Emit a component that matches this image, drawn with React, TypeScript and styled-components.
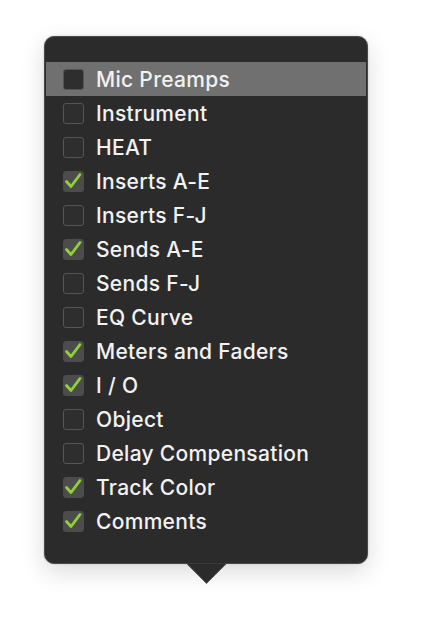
import styled, { createGlobalStyle } from "styled-components";

const GlobalStyle = createGlobalStyle`
  html, body {
    margin: 0;
    padding: 0;
    background: #ffffff;
  }
  body {
    font-family: Inter, "Noto Sans", sans-serif;
  }
`;

const Page = styled.div`
  width: 432px;
  height: 636px;
  padding: 36px 0 0 44px;
  box-sizing: border-box;
`;

const Popover = styled.div`
  position: relative;
  width: 324px;
  box-sizing: border-box;
  padding: 25px 1px 25px;
  background: #2b2b2b;
  border: 1px solid #4b4b4b;
  border-radius: 10px;
  box-shadow: 0 8px 24px rgba(0, 0, 0, 0.14), 0 0 2px rgba(0, 0, 0, 0.2);

  &::after {
    content: "";
    position: absolute;
    left: 147px;
    bottom: -15px;
    width: 28px;
    height: 28px;
    background: #2b2b2b;
    border-right: 1px solid #4b4b4b;
    border-bottom: 1px solid #4b4b4b;
    transform: rotate(45deg);
    clip-path: polygon(100% 0, 100% 100%, 0 100%);
  }
`;

const List = styled.ul`
  list-style: none;
  margin: 0;
  padding: 0;
`;

const Row = styled.li<{ $active?: boolean }>`
  display: flex;
  align-items: center;
  gap: 12px;
  height: 34px;
  padding: 0 0 0 17px;
  background: ${({ $active }) => ($active ? "#707070" : "transparent")};
  color: #f2f2f2;
  font-size: 21px;
  font-weight: 500;
  letter-spacing: 0.3px;
`;

const Box = styled.span<{ $checked?: boolean }>`
  display: flex;
  align-items: center;
  justify-content: center;
  flex: none;
  width: 21px;
  height: 21px;
  box-sizing: border-box;
  border-radius: 3px;
  background: ${({ $checked }) => ($checked ? "#4c4c4c" : "#2e2e2e")};
  border: 1px solid ${({ $checked }) => ($checked ? "#4c4c4c" : "#555555")};

  svg {
    width: 20px;
    height: 20px;
    margin-left: -1px;
  }
`;

const items: { label: string; checked: boolean }[] = [
  { label: "Mic Preamps", checked: false },
  { label: "Instrument", checked: false },
  { label: "HEAT", checked: false },
  { label: "Inserts A-E", checked: true },
  { label: "Inserts F-J", checked: false },
  { label: "Sends A-E", checked: true },
  { label: "Sends F-J", checked: false },
  { label: "EQ Curve", checked: false },
  { label: "Meters and Faders", checked: true },
  { label: "I / O", checked: true },
  { label: "Object", checked: false },
  { label: "Delay Compensation", checked: false },
  { label: "Track Color", checked: true },
  { label: "Comments", checked: true },
];

function Check() {
  return (
    <svg viewBox="0 0 20 20" fill="none">
      <path
        d="M3.5 10.5 L8 15.5 L17 3.5"
        stroke="#8fd13a"
        strokeWidth="2.8"
        strokeLinecap="round"
        strokeLinejoin="round"
      />
    </svg>
  );
}

export default function App() {
  return (
    <>
      <GlobalStyle />
      <Page>
        <Popover>
          <List>
            {items.map((it, i) => (
              <Row key={it.label} $active={i === 0}>
                <Box $checked={it.checked}>{it.checked && <Check />}</Box>
                {it.label}
              </Row>
            ))}
          </List>
        </Popover>
      </Page>
    </>
  );
}
